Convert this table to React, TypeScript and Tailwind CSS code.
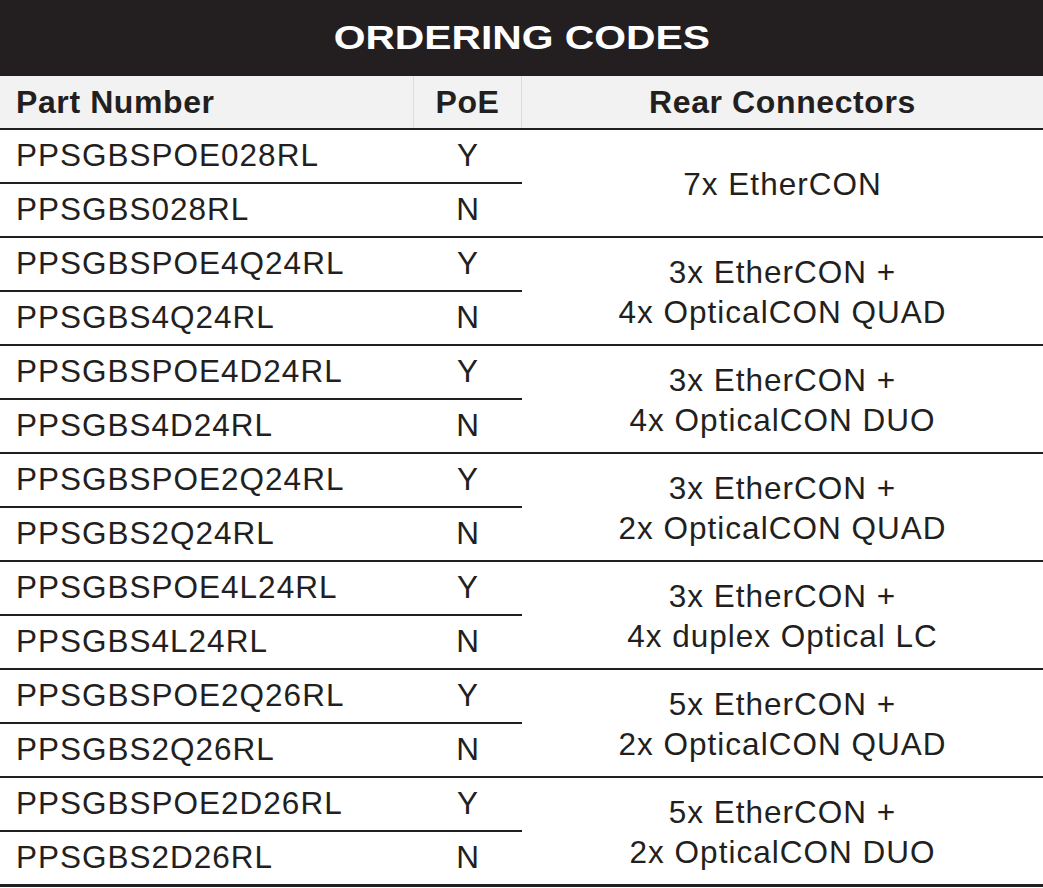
import React from "react";

type Group = {
  rows: { part: string; poe: string }[];
  rear: string[];
};

const groups: Group[] = [
  {
    rows: [
      { part: "PPSGBSPOE028RL", poe: "Y" },
      { part: "PPSGBS028RL", poe: "N" },
    ],
    rear: ["7x EtherCON"],
  },
  {
    rows: [
      { part: "PPSGBSPOE4Q24RL", poe: "Y" },
      { part: "PPSGBS4Q24RL", poe: "N" },
    ],
    rear: ["3x EtherCON +", "4x OpticalCON QUAD"],
  },
  {
    rows: [
      { part: "PPSGBSPOE4D24RL", poe: "Y" },
      { part: "PPSGBS4D24RL", poe: "N" },
    ],
    rear: ["3x EtherCON +", "4x OpticalCON DUO"],
  },
  {
    rows: [
      { part: "PPSGBSPOE2Q24RL", poe: "Y" },
      { part: "PPSGBS2Q24RL", poe: "N" },
    ],
    rear: ["3x EtherCON +", "2x OpticalCON QUAD"],
  },
  {
    rows: [
      { part: "PPSGBSPOE4L24RL", poe: "Y" },
      { part: "PPSGBS4L24RL", poe: "N" },
    ],
    rear: ["3x EtherCON +", "4x duplex Optical LC"],
  },
  {
    rows: [
      { part: "PPSGBSPOE2Q26RL", poe: "Y" },
      { part: "PPSGBS2Q26RL", poe: "N" },
    ],
    rear: ["5x EtherCON +", "2x OpticalCON QUAD"],
  },
  {
    rows: [
      { part: "PPSGBSPOE2D26RL", poe: "Y" },
      { part: "PPSGBS2D26RL", poe: "N" },
    ],
    rear: ["5x EtherCON +", "2x OpticalCON DUO"],
  },
];

export default function App() {
  return (
    <div className="w-[1043px] h-[888px] bg-white text-[#231f20] font-['Liberation_Sans',Arial,sans-serif] overflow-hidden">
      {/* title */}
      <div className="h-[76px] bg-[#231f20] flex items-center justify-center pb-[2px]">
        <span className="inline-block text-white font-bold text-[34px] scale-x-[1.2]">
          ORDERING CODES
        </span>
      </div>

      {/* header */}
      <div className="flex h-[54px] bg-[#f2f2f2] border-b-2 border-[#231f20] font-bold text-[32px] tracking-[0.6px]">
        <div className="w-[414px] border-r border-[#dcdcdc] flex items-center pl-4">Part Number</div>
        <div className="w-[108px] border-r border-[#dcdcdc] flex items-center justify-center">PoE</div>
        <div className="flex-1 flex items-center justify-center">Rear Connectors</div>
      </div>

      {/* body */}
      {groups.map((g, gi) => (
        <div
          key={gi}
          className={
            "flex border-b-2 border-[#231f20] text-[31.5px] tracking-[1px] " +
            (gi === groups.length - 1 ? "border-b-[3px]" : "")
          }
        >
          <div className="w-[522px]">
            {g.rows.map((r, ri) => (
              <div
                key={ri}
                className={
                  "flex items-center h-[52px] " +
                  (ri === 0 ? "h-[54px] border-b-2 border-[#231f20]" : "")
                }
              >
                <div className="w-[414px] pl-4">{r.part}</div>
                <div className="w-[108px] text-center">{r.poe}</div>
              </div>
            ))}
          </div>
          <div className="flex-1 flex flex-col items-center justify-center leading-[40px] pt-[2px]">
            {g.rear.map((t, ti) => (
              <div key={ti}>{t}</div>
            ))}
          </div>
        </div>
      ))}
    </div>
  );
}
